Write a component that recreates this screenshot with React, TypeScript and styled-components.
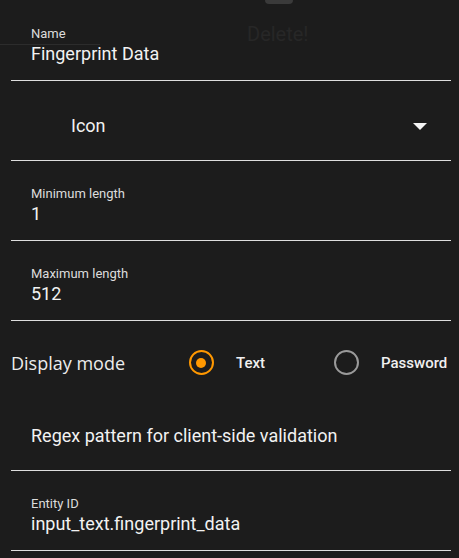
import styled, { createGlobalStyle } from "styled-components";

const GlobalStyle = createGlobalStyle`
  html, body {
    margin: 0;
    background: #1c1c1c;
  }
  body {
    font-family: Roboto, "Liberation Sans", sans-serif;
    color: #e1e1e1;
  }
`;

const Page = styled.div`
  position: relative;
  box-sizing: border-box;
  width: 459px;
  height: 558px;
  padding: 1px 8px 0 11px;
  overflow: hidden;
`;

// faded dialog behind the form
const Ghost = styled.div`
  position: absolute;
  inset: 0;
  pointer-events: none;
`;

const GhostButton = styled.div`
  position: absolute;
  left: 265px;
  top: -6px;
  width: 28px;
  height: 10px;
  border-radius: 4px;
  background: #3a3a3a;
`;

const GhostText = styled.div`
  position: absolute;
  left: 247px;
  top: 22px;
  font-size: 20px;
  color: #272727;
`;

const GhostLine = styled.div`
  position: absolute;
  left: 0;
  top: 44px;
  width: 100px;
  height: 1px;
  background: #2c2c2c;
`;

const Form = styled.div`
  position: relative;
  display: flex;
  flex-direction: column;
`;

const Field = styled.div<{ $pad?: number }>`
  box-sizing: border-box;
  height: 80px;
  padding: ${(p) => p.$pad ?? 25}px 0 0 20px;
  border-bottom: 1px solid #dedede;
  display: flex;
  flex-direction: column;
`;

const Label = styled.div`
  font-size: 13px;
  line-height: 16px;
  color: #dcdcdc;
`;

const Value = styled.div`
  font-size: 18px;
  line-height: 24px;
  color: #f2f2f2;
`;

const SelectRow = styled.div`
  display: flex;
  align-items: center;
  padding-left: 40px;
  padding-right: 24px;
`;

const SelectText = styled(Value)`
  flex: 1;
`;

const Arrow = styled.div`
  width: 0;
  height: 0;
  border-left: 7px solid transparent;
  border-right: 7px solid transparent;
  border-top: 7px solid #f5f5f5;
`;

const RadioRow = styled.div`
  box-sizing: border-box;
  height: 70px;
  padding-top: 13px;
  display: flex;
  align-items: center;
`;

const RowTitle = styled.div`
  flex: 0 0 170px;
  font-family: "Open Sans", "Noto Sans", sans-serif;
  font-size: 18px;
  color: #ececec;
`;

const Option = styled.label<{ $w?: number }>`
  flex: 0 0 ${(p) => (p.$w ? `${p.$w}px` : "auto")};
  display: flex;
  align-items: center;
  font-size: 15px;
  font-weight: 500;
  color: #f0f0f0;
  white-space: nowrap;
`;

const RadioBox = styled.span`
  width: 40px;
  height: 40px;
  display: flex;
  align-items: center;
  justify-content: center;
  margin-right: 15px;
`;

const Circle = styled.span<{ $on?: boolean }>`
  box-sizing: border-box;
  width: 25px;
  height: 25px;
  border-radius: 50%;
  border: ${(p) => (p.$on ? "2.5px solid #ff9800" : "2px solid #9a9a9a")};
  display: flex;
  align-items: center;
  justify-content: center;
  &::after {
    content: "";
    display: ${(p) => (p.$on ? "block" : "none")};
    width: 10px;
    height: 10px;
    border-radius: 50%;
    background: #ff9800;
  }
`;

export default function App() {
  return (
    <>
      <GlobalStyle />
      <Page>
        <Ghost>
          <GhostButton />
          <GhostText>Delete!</GhostText>
          <GhostLine />
        </Ghost>
        <Form>
          <Field>
            <Label>Name</Label>
            <Value>Fingerprint Data</Value>
          </Field>
          <Field $pad={33}>
            <SelectRow>
              <SelectText>Icon</SelectText>
              <Arrow />
            </SelectRow>
          </Field>
          <Field>
            <Label>Minimum length</Label>
            <Value>1</Value>
          </Field>
          <Field>
            <Label>Maximum length</Label>
            <Value>512</Value>
          </Field>
          <RadioRow>
            <RowTitle>Display mode</RowTitle>
            <Option $w={145}>
              <RadioBox>
                <Circle $on />
              </RadioBox>
              Text
            </Option>
            <Option>
              <RadioBox>
                <Circle />
              </RadioBox>
              Password
            </Option>
          </RadioRow>
          <Field $pad={33}>
            <Value>Regex pattern for client-side validation</Value>
          </Field>
          <Field>
            <Label>Entity ID</Label>
            <Value>input_text.fingerprint_data</Value>
          </Field>
        </Form>
      </Page>
    </>
  );
}
